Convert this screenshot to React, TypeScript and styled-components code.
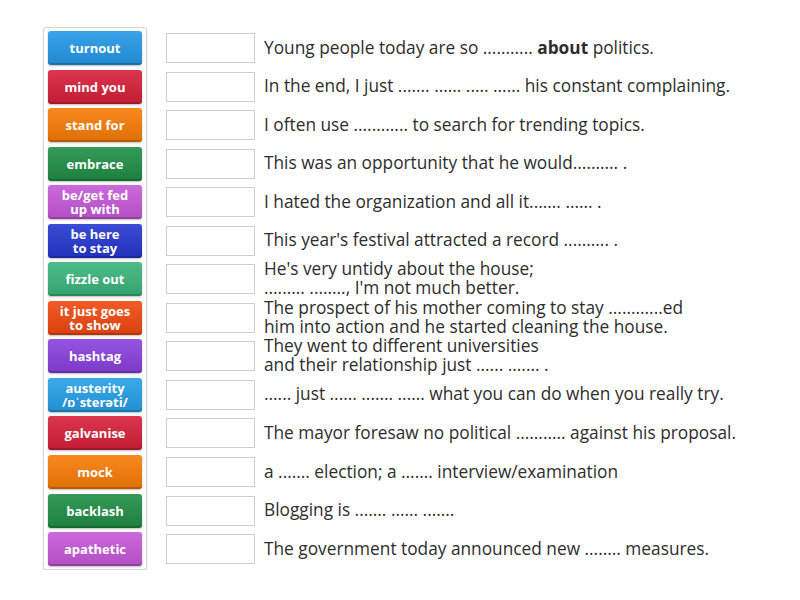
import styled, { createGlobalStyle } from "styled-components";

const GlobalStyle = createGlobalStyle`
  body {
    margin: 0;
    background: #fff;
    font-family: "Open Sans", "Liberation Sans", sans-serif;
  }
`;

const Page = styled.div`
  display: flex;
  align-items: flex-start;
  gap: 19px;
  padding: 27px 0 0 43px;
`;

const Bank = styled.div`
  display: flex;
  flex-direction: column;
  gap: 4.55px;
  padding: 3px;
  width: 96px;
  border: 1px solid #d6d6d6;
  border-radius: 3px;
  box-shadow: 0 1px 2px rgba(0, 0, 0, 0.12);
  background: #fff;
`;

const Tile = styled.div<{ $color: string }>`
  display: flex;
  align-items: center;
  justify-content: center;
  height: 34px;
  width: 94px;
  margin-left: 1px;
  border-radius: 3px;
  background: linear-gradient(
    to bottom,
    rgba(255, 255, 255, 0.1),
    rgba(0, 0, 0, 0.1)
  ), ${(p) => p.$color};
  box-shadow: inset 0 -2px 0 rgba(0, 0, 0, 0.18), 0 1px 2px rgba(0, 0, 0, 0.25);
  color: #fff;
  font-size: 13px;
  font-weight: 700;
  line-height: 14px;
  text-align: center;
  white-space: pre-line;
`;

const Rows = styled.div`
  display: flex;
  flex-direction: column;
  gap: 4.55px;
  padding-top: 4px;
`;

const Row = styled.div`
  display: flex;
  align-items: center;
  height: 34px;
  gap: 9px;
`;

const Slot = styled.div`
  flex: none;
  width: 87px;
  height: 28px;
  border: 1px solid #cfcfcf;
  background: #fff;
`;

const Sentence = styled.div`
  margin-bottom: 2px;
  color: #2d2d2d;
  font-size: 17.3px;
  line-height: 19px;
  white-space: pre-line;

  b {
    font-weight: 700;
  }
`;

const tiles: [string, string][] = [
  ["turnout", "#2398e6"],
  ["mind you", "#d81f3a"],
  ["stand for", "#f77c05"],
  ["embrace", "#1f8e46"],
  ["be/get fed\nup with", "#c658d8"],
  ["be here\nto stay", "#2437cf"],
  ["fizzle out", "#3ab57c"],
  ["it just goes\nto show", "#f1480f"],
  ["hashtag", "#8a40df"],
  ["austerity\n/ɒˈsterəti/", "#259fe8"],
  ["galvanise", "#d81f3a"],
  ["mock", "#f77c05"],
  ["backlash", "#1f8e46"],
  ["apathetic", "#c658d8"],
];

const sentences: React.ReactNode[] = [
  <>Young people today are so ........... <b>about</b> politics.</>,
  "In the end, I just ....... ...... ..... ...... his constant complaining.",
  "I often use ............ to search for trending topics.",
  "This was an opportunity that he would.......... .",
  "I hated the organization and all it....... ...... .",
  "This year's festival attracted a record .......... .",
  "He's very untidy about the house;\n......... ........, I'm not much better.",
  "The prospect of his mother coming to stay ............ed\nhim into action and he started cleaning the house.",
  "They went to different universities\nand their relationship just ...... ....... .",
  "...... just ...... ....... ...... what you can do when you really try.",
  "The mayor foresaw no political ........... against his proposal.",
  "a ....... election; a ....... interview/examination",
  "Blogging is ....... ...... .......",
  "The government today announced new ........ measures.",
];

export default function App() {
  return (
    <>
      <GlobalStyle />
      <Page>
        <Bank>
          {tiles.map(([label, color]) => (
            <Tile key={label} $color={color}>
              {label}
            </Tile>
          ))}
        </Bank>
        <Rows>
          {sentences.map((s, i) => (
            <Row key={i}>
              <Slot />
              <Sentence>{s}</Sentence>
            </Row>
          ))}
        </Rows>
      </Page>
    </>
  );
}
